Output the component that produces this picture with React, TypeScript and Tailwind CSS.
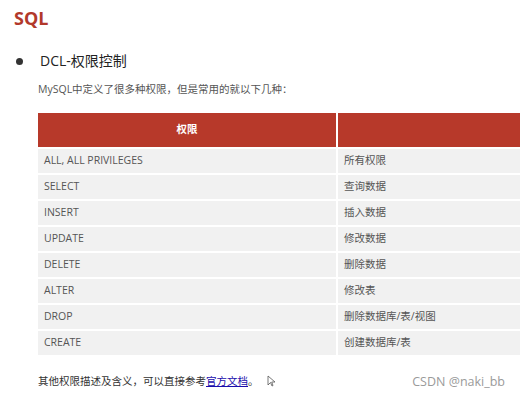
import React from "react";

const rows: [string, string][] = [
  ["ALL, ALL PRIVILEGES", "所有权限"],
  ["SELECT", "查询数据"],
  ["INSERT", "插入数据"],
  ["UPDATE", "修改数据"],
  ["DELETE", "删除数据"],
  ["ALTER", "修改表"],
  ["DROP", "删除数据库/表/视图"],
  ["CREATE", "创建数据库/表"],
];

export default function App() {
  return (
    <div
      className="w-[520px] h-[395px] bg-white overflow-hidden relative"
      style={{ fontFamily: '"Open Sans", "Noto Sans CJK SC", sans-serif' }}
    >
      <div className="pl-[14px] pt-[6px] text-[18px] font-bold text-[#b2392b] leading-[24px]">SQL</div>
      <div className="flex items-center mt-[21px] h-[20px]">
        <div className="ml-[16px] w-[7px] h-[7px] rounded-full bg-[#333]" />
        <div className="ml-[17px] text-[14px] text-[#222] leading-[20px]">DCL-权限控制</div>
      </div>
      <div className="ml-[38px] mt-[10px] text-[10.5px] text-[#555] leading-[16px]">
        MySQL中定义了很多种权限，但是常用的就以下几种：
      </div>
      <div className="ml-[38px] mt-[16px] w-[482px]">
        <div className="flex h-[34px] bg-[#b7392a] text-white text-[10.5px] font-bold">
          <div className="w-[300px] flex items-center justify-center border-r-2 border-white">权限</div>
          <div className="flex-1" />
        </div>
        {rows.map(([a, b]) => (
          <div key={a} className="flex h-[26px] bg-[#f1f1f1] border-t-2 border-white text-[10.5px] text-[#555]">
            <div className="w-[300px] flex items-center pl-[6px] border-r-2 border-white">{a}</div>
            <div className="flex-1 flex items-center pl-[6px]">{b}</div>
          </div>
        ))}
      </div>
      <div className="flex items-center mt-[18px] h-[18px]">
        <div className="ml-[38px] text-[10.5px] text-[#333]">
          其他权限描述及含义，可以直接参考<span className="text-[#1a0dab] underline">官方文档</span>。
        </div>
        <svg className="ml-[8px] -mt-[2px]" width="9" height="12" viewBox="0 0 9 12">
          <path d="M1 1 L1 10 L3.5 7.5 L5 11 L6 10.5 L4.7 7 L8 7 Z" fill="white" stroke="#555" strokeWidth="0.8" />
        </svg>
        <div className="ml-auto mr-[15px] text-[12.5px] text-[#9a9a9a]">CSDN @naki_bb</div>
      </div>
    </div>
  );
}
